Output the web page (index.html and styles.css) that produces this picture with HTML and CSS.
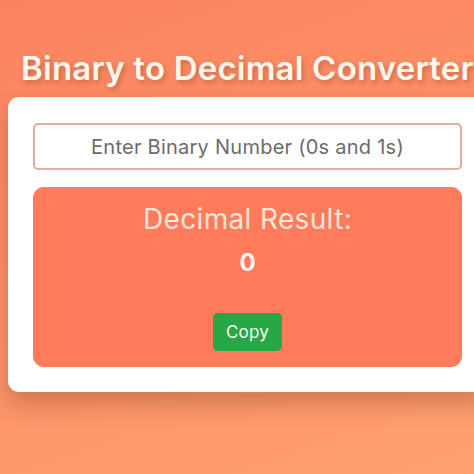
FILE: index.html
```html
<!DOCTYPE html>
<html lang="en">
<head>
<meta charset="utf-8">
<title>Binary to Decimal Converter</title>
<link rel="stylesheet" href="styles.css">
</head>
<body>
<div class="page">
  <h1 class="title">Binary to Decimal Converter</h1>
  <div class="card">
    <input class="binary-input" type="text" placeholder="Enter Binary Number (0s and 1s)">
    <div class="result">
      <div class="result-label">Decimal Result:</div>
      <div class="result-value">0</div>
      <button class="copy-btn">Copy</button>
    </div>
  </div>
</div>
</body>
</html>
```
FILE: styles.css
```css
html, body {
  margin: 0;
  padding: 0;
  width: 474px;
  height: 474px;
  overflow: hidden;
}
body {
  background: linear-gradient(160deg, #fb8460 0%, #fd9268 55%, #ffa16f 100%);
  font-family: Inter, "Noto Sans", sans-serif;
}
.page {
  width: 479px;
  margin-left: 8px;
  padding-top: 49px;
}
.title {
  margin: 0 0 10px 0;
  text-align: center;
  font-size: 33px;
  font-weight: 600;
  line-height: 38px;
  color: #fff6ec;
  letter-spacing: 0.2px;
  white-space: nowrap;
  text-shadow: 2px 3px 5px rgba(120, 50, 20, 0.35);
}
.card {
  background: #ffffff;
  border-radius: 11px;
  padding: 26px 25px 25px 25px;
  display: flex;
  flex-direction: column;
  gap: 17px;
  box-shadow: 0 12px 22px rgba(110, 50, 20, 0.3);
}
.binary-input {
  box-sizing: border-box;
  height: 47px;
  width: 100%;
  border: 2px solid #e2ab9e;
  border-radius: 5px;
  text-align: center;
  font-family: Inter, "Noto Sans", sans-serif;
  font-size: 20px;
  letter-spacing: 0.25px;
  color: #555;
  background: #fff;
  outline: none;
}
.binary-input::placeholder {
  color: #6c6c6c;
}
.result {
  background: #ff7b5c;
  border-radius: 11px;
  height: 180px;
  box-sizing: border-box;
  padding-top: 15px;
  display: flex;
  flex-direction: column;
  align-items: center;
}
.result-label {
  font-size: 28px;
  line-height: 34px;
  letter-spacing: 0.35px;
  color: #fde6d8;
  font-weight: 400;
}
.result-value {
  margin-top: 12px;
  font-size: 24px;
  line-height: 30px;
  font-weight: 700;
  color: #fff4ec;
}
.copy-btn {
  margin-top: 35px;
  width: 69px;
  height: 38px;
  border: none;
  border-radius: 5px;
  background: #28a745;
  color: #f4fff4;
  font-family: Inter, "Noto Sans", sans-serif;
  font-size: 17px;
  letter-spacing: 0.2px;
  padding: 0;
}
```
